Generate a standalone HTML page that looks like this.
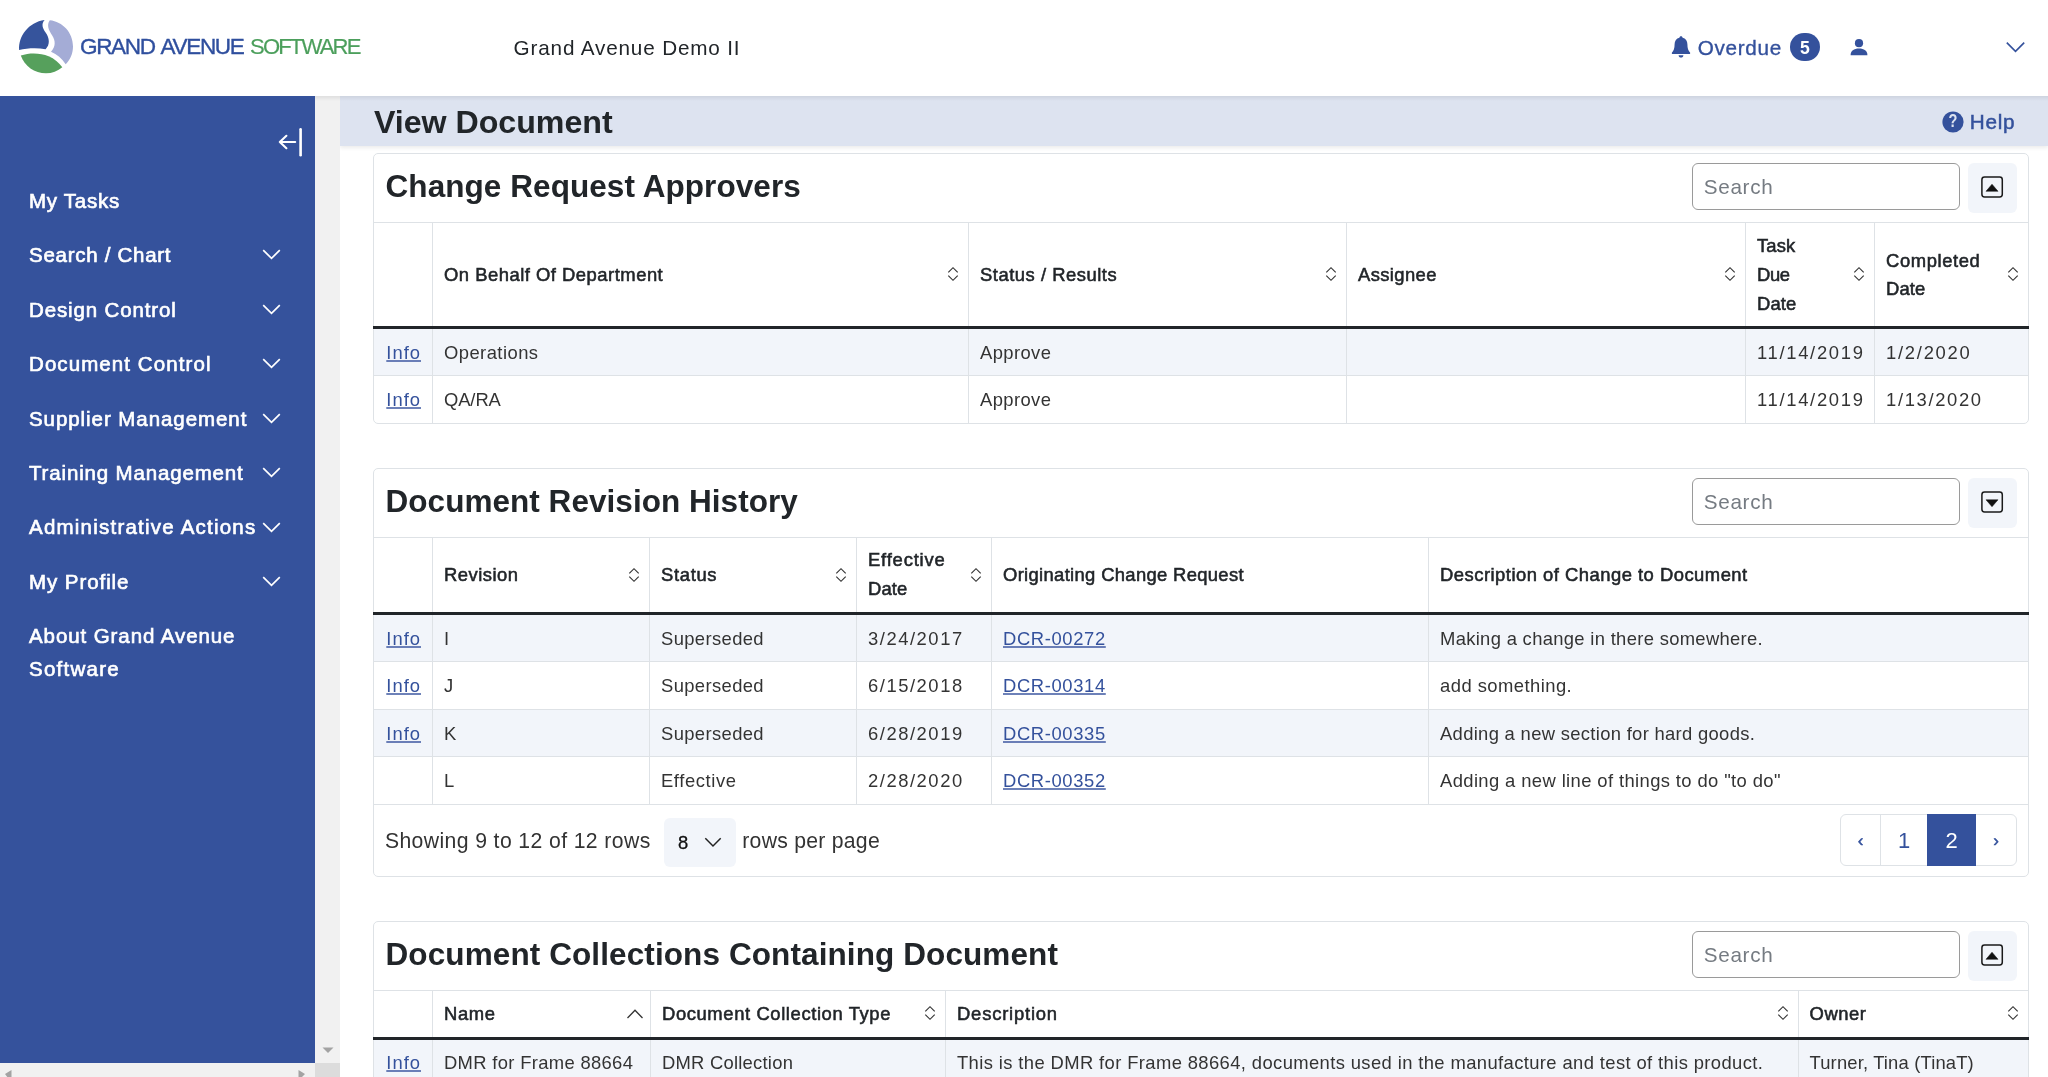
<!DOCTYPE html>
<html lang="en">
<head>
<meta charset="utf-8">
<title>View Document</title>
<style>
*{box-sizing:border-box;margin:0;padding:0}
html,body{width:2048px;height:1077px;overflow:hidden;background:#fff}
body{font-family:"Liberation Sans",Arial,sans-serif;font-size:18.4px;color:#333;position:relative}
.abs{position:absolute}
.t{position:absolute;white-space:nowrap;line-height:1}
a{color:#34519c;text-decoration:underline;text-underline-offset:1.4px;text-decoration-thickness:2px;text-decoration-color:rgba(52,81,156,.72)}
/* header */
#hdr{position:absolute;left:0;top:0;width:2048px;height:96px;background:#fff}
#hshadow{position:absolute;left:315px;top:96px;width:1733px;height:5px;background:linear-gradient(rgba(0,0,0,.07),rgba(0,0,0,0));z-index:5;pointer-events:none}
/* sidebar */
#side{position:absolute;left:0;top:96px;width:315px;height:967px;background:#35529c;color:#fff}
#side .it{position:absolute;left:29px;font-weight:400;-webkit-text-stroke:.65px #fff;font-size:20.5px;line-height:24px;white-space:nowrap}
#side svg.ch{position:absolute;left:262px;width:19px;height:11px}
#vs{position:absolute;left:315px;top:96px;width:25px;height:967px;background:#f1f1f1}
#hs{position:absolute;left:0;top:1063px;width:315px;height:14px;background:#f1f1f1}
#cs{position:absolute;left:315px;top:1063px;width:25px;height:14px;background:#dcdcdc}
/* main */
#tb{position:absolute;left:340px;top:96px;width:1708px;height:50px;background:#dde3f0;box-shadow:0 2px 4px rgba(0,0,0,.08);clip-path:inset(0 0 -10px 0)}
.card{position:absolute;left:373px;width:1656px;border:1px solid #dee2e6;border-radius:5px;background:#fff}
.h3{position:absolute;left:11.5px;font-weight:700;font-size:31.5px;line-height:36px;color:#212529;white-space:nowrap}
.srch{position:absolute;left:1317.5px;width:268px;height:47px;border:1.3px solid #9a9a9a;border-radius:6px;background:#fff}
.srch span{position:absolute;left:11.2px;top:11px;font-size:20.7px;line-height:24px;color:#757b82;letter-spacing:.7px}
.tog{position:absolute;left:1593.5px;width:49.5px;height:49.5px;border-radius:6px;background:#f2f5fa}
.tog svg{position:absolute;left:12px;top:11.9px;width:24px;height:24px}
.row{position:absolute;left:0;width:1654px;border-top:1px solid #dee2e6}
.row.s{background:#f2f5fa}
.c{position:absolute;top:0;height:100%;border-left:1px solid #dee2e6;padding-left:11px;white-space:nowrap;display:flex;align-items:center}
.c.f{border-left:0;padding-left:12.3px}
.b{padding-top:1.2px}
.hd{font-weight:400;color:#212529;font-size:18.4px;line-height:28.7px;-webkit-text-stroke:.55px #212529}
.hd i{font-style:normal}
.hd .c{white-space:normal;padding-top:1.6px}
.thick{position:absolute;left:-1px;width:1656px;height:2.6px;background:#212529}
svg.so{position:absolute;width:12px;height:16px}
</style>
</head>
<body>
<div id="wrap" style="position:absolute;left:0;top:0;width:2048px;height:1077px;will-change:transform">
<div id="hdr">
<svg class="abs" style="left:0;top:0" width="100" height="96" viewBox="0 0 100 96">
<path d="M19.1 49.9 C18.2 36.5 28.5 22.2 44.6 20.1 C41 24 42.6 28.5 45.6 32.5 C49.5 38 50.3 44.5 45.6 49.2 C37 47.6 27 48.2 19.1 49.9Z" fill="#36549c"/>
<path d="M49.8 20.3 C62.5 21.5 73 32.5 73 46.5 C73 53.5 70.3 59.5 65.7 64.2 C62 58.5 57 54.3 51 51.7 C55.8 46.5 55.6 41 52.2 35.6 C48.8 30.2 46.3 25.2 49.8 20.3Z" fill="#a4acd6"/>
<path d="M20.8 55.4 C30 52.4 40.5 52.8 48.6 56.2 C54.3 58.7 59 62.5 62.3 67.2 C57.8 71 52 73.3 46 73.3 C34.5 73.3 24.5 66 20.8 55.4Z" fill="#56a05c"/>
</svg>
<span class="t" id="lg1" style="left:80.3px;top:32.9px;font-size:22.8px;line-height:26px;color:#2f4f9e;-webkit-text-stroke:.35px #2f4f9e;letter-spacing:-1.4px;word-spacing:2.4px;transform-origin:0 50%;transform:scaleX(.99)">GRAND AVENUE</span>
<span class="t" id="lg2" style="left:250.4px;top:32.9px;font-size:22.8px;line-height:26px;color:#4c9f5c;-webkit-text-stroke:.2px #4c9f5c;letter-spacing:-1.9px;transform-origin:0 50%;transform:scaleX(.968)">SOFTWARE</span>
<span class="t" id="demo" style="left:513.6px;top:35.5px;font-size:20.7px;line-height:24px;color:#212529;letter-spacing:.84px">Grand Avenue Demo II</span>
<svg class="abs" style="left:1671px;top:35px" width="20" height="24" viewBox="0 0 20 24"><path d="M10 1.2 C10.9 1.2 11.6 1.9 11.6 2.8 C14.6 3.5 16.4 6.1 16.4 9.3 C16.4 13.6 17.3 15.6 19 17.4 C19.5 18 19.1 19 18.3 19 L1.7 19 C.9 19 .5 18 1 17.4 C2.7 15.6 3.6 13.6 3.6 9.3 C3.6 6.1 5.4 3.5 8.4 2.8 C8.4 1.9 9.1 1.2 10 1.2Z M7.6 20.2 L12.4 20.2 C12.4 21.6 11.3 22.6 10 22.6 C8.7 22.6 7.6 21.6 7.6 20.2Z" fill="#34519c"/></svg>
<span class="t" id="ovd" style="left:1697.7px;top:35.8px;font-size:20.7px;line-height:24px;color:#34519c;letter-spacing:.7px;-webkit-text-stroke:.35px #34519c">Overdue</span>
<div class="abs" style="left:1790px;top:32.5px;width:30px;height:28.6px;border-radius:15px;background:#34519c"></div>
<span class="t" style="left:1790px;width:30px;text-align:center;top:36.6px;font-size:17.6px;line-height:22px;color:#fff;font-weight:700">5</span>
<svg class="abs" style="left:1849px;top:38px" width="20" height="18" viewBox="0 0 20 18"><circle cx="10" cy="5.2" r="4.1" fill="#34519c"/><path d="M1.6 17.2 C1.6 12.8 5 10.6 10 10.6 C15 10.6 18.4 12.8 18.4 17.2Z" fill="#34519c"/></svg>
<svg class="abs" style="left:2005px;top:41px" width="21" height="13" viewBox="0 0 21 13"><path d="M1.8 1.6 L10.5 10.3 L19.2 1.6" fill="none" stroke="#34519c" stroke-width="1.6"/></svg>
</div>
<div id="hshadow"></div>
<div id="side">
<svg class="abs" style="left:274px;top:28px" width="34" height="36" viewBox="0 0 34 36"><path d="M26.6 5.2 V31.2" stroke="#fff" stroke-width="2.6" stroke-linecap="round" fill="none"/><path d="M21.2 18 H5.8 M12.4 11.8 L5.8 18 L12.4 24.2" stroke="#fff" stroke-width="2.1" stroke-linecap="round" stroke-linejoin="round" fill="none"/></svg>
<div class="it" style="top:92.8px;letter-spacing:0.733px">My Tasks</div>
<div class="it" style="top:147.1px;letter-spacing:0.723px">Search / Chart</div>
<svg class="ch" style="top:153.4px" viewBox="0 0 19 11"><path d="M1.2 1.2 L9.5 9.3 L17.8 1.2" fill="none" stroke="#fff" stroke-width="1.7"/></svg>
<div class="it" style="top:201.9px;letter-spacing:0.86px">Design Control</div>
<svg class="ch" style="top:208.2px" viewBox="0 0 19 11"><path d="M1.2 1.2 L9.5 9.3 L17.8 1.2" fill="none" stroke="#fff" stroke-width="1.7"/></svg>
<div class="it" style="top:255.9px;letter-spacing:1.083px">Document Control</div>
<svg class="ch" style="top:262.2px" viewBox="0 0 19 11"><path d="M1.2 1.2 L9.5 9.3 L17.8 1.2" fill="none" stroke="#fff" stroke-width="1.7"/></svg>
<div class="it" style="top:310.5px;letter-spacing:0.934px">Supplier Management</div>
<svg class="ch" style="top:316.8px" viewBox="0 0 19 11"><path d="M1.2 1.2 L9.5 9.3 L17.8 1.2" fill="none" stroke="#fff" stroke-width="1.7"/></svg>
<div class="it" style="top:364.9px;letter-spacing:0.837px">Training Management</div>
<svg class="ch" style="top:371.2px" viewBox="0 0 19 11"><path d="M1.2 1.2 L9.5 9.3 L17.8 1.2" fill="none" stroke="#fff" stroke-width="1.7"/></svg>
<div class="it" style="top:419.4px;letter-spacing:1.224px">Administrative Actions</div>
<svg class="ch" style="top:425.7px" viewBox="0 0 19 11"><path d="M1.2 1.2 L9.5 9.3 L17.8 1.2" fill="none" stroke="#fff" stroke-width="1.7"/></svg>
<div class="it" style="top:473.8px;letter-spacing:0.93px">My Profile</div>
<svg class="ch" style="top:480.1px" viewBox="0 0 19 11"><path d="M1.2 1.2 L9.5 9.3 L17.8 1.2" fill="none" stroke="#fff" stroke-width="1.7"/></svg>
<div class="it" style="top:528.0px;letter-spacing:0.912px">About Grand Avenue</div>
<div class="it" style="top:560.5px;letter-spacing:1.246px">Software</div>
</div>
<div id="vs"><svg class="abs" style="left:7px;top:951px" width="12" height="7" viewBox="0 0 12 7"><path d="M0.5 0.5 H11.5 L6 6Z" fill="#a3a3a3"/></svg></div><div id="hs"><svg class="abs" style="left:4px;top:7px" width="8" height="8" viewBox="0 0 8 8"><path d="M7.5 0 V8 H4 L1 4Z" fill="#a3a3a3"/></svg><svg class="abs" style="left:298px;top:7px" width="8" height="8" viewBox="0 0 8 8"><path d="M.5 0 V8 H3 L7 4Z" fill="#a3a3a3"/></svg></div><div id="cs"></div>
<!--MAIN-->
<div id="tb"><div class="t" style="left:34px;top:8px;font-weight:700;font-size:32.2px;line-height:36px;color:#212529;letter-spacing:-.04px">View Document</div>
<svg class="abs" style="left:1600.9px;top:13.5px" width="24" height="24" viewBox="0 0 24 24"><circle cx="12" cy="12" r="10.6" fill="#34519c"/></svg>
<div class="t" style="left:1600.9px;width:24px;text-align:center;top:16.3px;font-size:18.2px;line-height:18px;font-weight:700;transform:scaleX(.8);color:#dde3f0">?</div>
<div class="t" style="left:1629.8px;top:13.5px;font-size:20.7px;line-height:24px;color:#34519c;letter-spacing:.72px;-webkit-text-stroke:.5px #34519c">Help</div>
</div>
<div class="card" style="top:153px;height:270.5px">
<div class="h3" style="top:14.40px;letter-spacing:0.07px">Change Request Approvers</div>
<div class="srch" style="top:9.2px"><span>Search</span></div>
<div class="tog" style="top:9.2px"><svg viewBox="0 0 24 24"><rect x="1.9" y="2.1" width="20.4" height="19.8" rx="2.6" fill="none" stroke="#1a1a1a" stroke-width="1.5"/><path d="M6 16.3 L12 9.2 L18 16.3Z" fill="#111" stroke="#111" stroke-width=".5" stroke-linejoin="round"/></svg></div>
<div class="row hd" style="top:68px;height:104px">
<div class="c f" style="left:0px;width:58px;letter-spacing:0px"><span></span></div>
<div class="c" style="left:58px;width:536px;letter-spacing:0.51px"><span>On Behalf Of Department</span><svg class="so" style="left:514.2px;top:43.0px" viewBox="0 0 12 16"><path d="M1.3 6.4 L6 1.7 L10.7 6.4 M1.3 9.6 L6 14.3 L10.7 9.6" fill="none" stroke="#333" stroke-width="1.15"/></svg></div>
<div class="c" style="left:594px;width:378px;letter-spacing:0.52px"><span>Status / Results</span><svg class="so" style="left:356.2px;top:43.0px" viewBox="0 0 12 16"><path d="M1.3 6.4 L6 1.7 L10.7 6.4 M1.3 9.6 L6 14.3 L10.7 9.6" fill="none" stroke="#333" stroke-width="1.15"/></svg></div>
<div class="c" style="left:972px;width:399px;letter-spacing:0.39px"><span>Assignee</span><svg class="so" style="left:377.2px;top:43.0px" viewBox="0 0 12 16"><path d="M1.3 6.4 L6 1.7 L10.7 6.4 M1.3 9.6 L6 14.3 L10.7 9.6" fill="none" stroke="#333" stroke-width="1.15"/></svg></div>
<div class="c" style="left:1371px;width:129px;letter-spacing:0.13px"><span style="display:block;width:48px">Task <i style="letter-spacing:-.4px">Due</i> Date</span><svg class="so" style="left:107.2px;top:43.0px" viewBox="0 0 12 16"><path d="M1.3 6.4 L6 1.7 L10.7 6.4 M1.3 9.6 L6 14.3 L10.7 9.6" fill="none" stroke="#333" stroke-width="1.15"/></svg></div>
<div class="c" style="left:1500px;width:154px;letter-spacing:0.6px"><span style="display:block;width:104px">Completed <i style="letter-spacing:.13px">Date</i></span><svg class="so" style="left:132.2px;top:43.0px" viewBox="0 0 12 16"><path d="M1.3 6.4 L6 1.7 L10.7 6.4 M1.3 9.6 L6 14.3 L10.7 9.6" fill="none" stroke="#333" stroke-width="1.15"/></svg></div>
</div>
<div class="thick" style="top:172.2px"></div>
<div class="row s" style="border-top:0;top:174.6px;height:46.8px">
<div class="c f b" style="left:0px;width:58px;letter-spacing:1.0px"><a>Info</a></div><div class="c b" style="left:58px;width:536px;letter-spacing:0.45px">Operations</div><div class="c b" style="left:594px;width:378px;letter-spacing:0.4px">Approve</div><div class="c b" style="left:972px;width:399px;letter-spacing:0.28px"></div><div class="c b" style="left:1371px;width:129px;letter-spacing:1.69px">11/14/2019</div><div class="c b" style="left:1500px;width:154px;letter-spacing:1.74px">1/2/2020</div>
</div>
<div class="row" style="top:221.4px;height:47.4px">
<div class="c f b" style="left:0px;width:58px;letter-spacing:1.0px"><a>Info</a></div><div class="c b" style="left:58px;width:536px;letter-spacing:-0.1px">QA/RA</div><div class="c b" style="left:594px;width:378px;letter-spacing:0.4px">Approve</div><div class="c b" style="left:972px;width:399px;letter-spacing:0.28px"></div><div class="c b" style="left:1371px;width:129px;letter-spacing:1.69px">11/14/2019</div><div class="c b" style="left:1500px;width:154px;letter-spacing:1.66px">1/13/2020</div>
</div>
</div>
<div class="card" style="top:467.5px;height:409.5px">
<div class="h3" style="top:14.50px;letter-spacing:0.04px">Document Revision History</div>
<div class="srch" style="top:9.7px"><span>Search</span></div>
<div class="tog" style="top:9.7px"><svg viewBox="0 0 24 24"><rect x="1.9" y="2.1" width="20.4" height="19.8" rx="2.6" fill="none" stroke="#1a1a1a" stroke-width="1.5"/><path d="M6 9.8 L18 9.8 L12 16.7Z" fill="#111" stroke="#111" stroke-width=".5" stroke-linejoin="round"/></svg></div>
<div class="row hd" style="top:68.5px;height:75.2px">
<div class="c f" style="padding-top:0px;left:0px;width:58px;letter-spacing:0px"><span></span></div>
<div class="c" style="padding-top:0px;left:58px;width:217px;letter-spacing:0.48px"><span>Revision</span><svg class="so" style="left:195.2px;top:28.6px" viewBox="0 0 12 16"><path d="M1.3 6.4 L6 1.7 L10.7 6.4 M1.3 9.6 L6 14.3 L10.7 9.6" fill="none" stroke="#333" stroke-width="1.15"/></svg></div>
<div class="c" style="padding-top:0px;left:275px;width:207px;letter-spacing:0.68px"><span>Status</span><svg class="so" style="left:185.2px;top:28.6px" viewBox="0 0 12 16"><path d="M1.3 6.4 L6 1.7 L10.7 6.4 M1.3 9.6 L6 14.3 L10.7 9.6" fill="none" stroke="#333" stroke-width="1.15"/></svg></div>
<div class="c" style="padding-top:0px;left:482px;width:135px;letter-spacing:0.82px"><span style="display:block;width:86px">Effective <i style="letter-spacing:.13px">Date</i></span><svg class="so" style="left:113.2px;top:28.6px" viewBox="0 0 12 16"><path d="M1.3 6.4 L6 1.7 L10.7 6.4 M1.3 9.6 L6 14.3 L10.7 9.6" fill="none" stroke="#333" stroke-width="1.15"/></svg></div>
<div class="c" style="padding-top:0px;left:617px;width:437px;letter-spacing:0.34px"><span>Originating Change Request</span></div>
<div class="c" style="padding-top:0px;left:1054px;width:600px;letter-spacing:0.495px"><span>Description of Change to Document</span></div>
</div>
<div class="thick" style="top:143.89999999999998px"></div>
<div class="row s" style="border-top:0;top:146.3px;height:46.4px">
<div class="c f b" style="left:0px;width:58px;letter-spacing:1.0px"><a>Info</a></div><div class="c b" style="left:58px;width:217px;letter-spacing:0.28px">I</div><div class="c b" style="left:275px;width:207px;letter-spacing:0.38px">Superseded</div><div class="c b" style="left:482px;width:135px;letter-spacing:1.54px">3/24/2017</div><div class="c b" style="left:617px;width:437px;letter-spacing:0.63px"><a>DCR-00272</a></div><div class="c b" style="left:1054px;width:600px;letter-spacing:0.32px">Making a change in there somewhere.</div>
</div>
<div class="row" style="top:192.7px;height:47.5px">
<div class="c f b" style="left:0px;width:58px;letter-spacing:1.0px"><a>Info</a></div><div class="c b" style="left:58px;width:217px;letter-spacing:0.28px">J</div><div class="c b" style="left:275px;width:207px;letter-spacing:0.38px">Superseded</div><div class="c b" style="left:482px;width:135px;letter-spacing:1.54px">6/15/2018</div><div class="c b" style="left:617px;width:437px;letter-spacing:0.63px"><a>DCR-00314</a></div><div class="c b" style="left:1054px;width:600px;letter-spacing:0.46px">add something.</div>
</div>
<div class="row s" style="top:240.2px;height:47.5px">
<div class="c f b" style="left:0px;width:58px;letter-spacing:1.0px"><a>Info</a></div><div class="c b" style="left:58px;width:217px;letter-spacing:0.28px">K</div><div class="c b" style="left:275px;width:207px;letter-spacing:0.38px">Superseded</div><div class="c b" style="left:482px;width:135px;letter-spacing:1.54px">6/28/2019</div><div class="c b" style="left:617px;width:437px;letter-spacing:0.63px"><a>DCR-00335</a></div><div class="c b" style="left:1054px;width:600px;letter-spacing:0.32px">Adding a new section for hard goods.</div>
</div>
<div class="row" style="top:287.7px;height:47.5px">
<div class="c f b" style="left:0px;width:58px;letter-spacing:0.28px"></div><div class="c b" style="left:58px;width:217px;letter-spacing:0.28px">L</div><div class="c b" style="left:275px;width:207px;letter-spacing:0.6px">Effective</div><div class="c b" style="left:482px;width:135px;letter-spacing:1.54px">2/28/2020</div><div class="c b" style="left:617px;width:437px;letter-spacing:0.63px"><a>DCR-00352</a></div><div class="c b" style="left:1054px;width:600px;letter-spacing:0.39px">Adding a new line of things to do "to do"</div>
</div>
<div class="row" style="top:335.7px;height:1px"></div>
<div class="t" style="left:10.9px;top:360.3px;font-size:21.2px;line-height:24px;color:#333;letter-spacing:.39px">Showing 9 to 12 of 12 rows</div>
<div class="abs" style="left:290.1px;top:349.3px;width:72.4px;height:48.8px;border-radius:6px;background:#f2f5fa"></div>
<div class="t" style="left:303.9px;top:362px;font-size:18.4px;line-height:24px;color:#111;-webkit-text-stroke:.3px #111">8</div>
<svg class="abs" style="left:329.8px;top:368.5px" width="18" height="11" viewBox="0 0 18 11"><path d="M1.3 1.3 L9 9 L16.7 1.3" fill="none" stroke="#222" stroke-width="1.5"/></svg>
<div class="t" style="left:368.3px;top:360.3px;font-size:21.2px;line-height:24px;color:#333;letter-spacing:.26px">rows per page</div>
<div class="abs" style="left:1466px;top:345.5px;width:177px;height:51.5px;border:1px solid #dee2e6;border-radius:6px">
<div class="abs" style="left:39.3px;top:0;width:1px;height:50px;background:#dee2e6"></div>
<div class="abs" style="left:86.1px;top:-1px;width:49px;height:52px;background:#34519c"></div>
<div class="t" style="left:0;width:39px;text-align:center;top:13.6px;font-size:17px;line-height:24px;color:#34519c;-webkit-text-stroke:.5px #34519c">&lsaquo;</div>
<div class="t" style="left:40px;width:46px;text-align:center;top:13.5px;font-size:22px;line-height:24px;color:#34519c">1</div>
<div class="t" style="left:86px;width:49px;text-align:center;top:13.5px;font-size:22px;line-height:24px;color:#fff">2</div>
<div class="t" style="left:135px;width:40px;text-align:center;top:13.6px;font-size:17px;line-height:24px;color:#34519c;-webkit-text-stroke:.5px #34519c">&rsaquo;</div>
</div>
</div>
<div class="card" style="top:921px;height:200px">
<div class="h3" style="top:13.90px;letter-spacing:0.1px">Document Collections Containing Document</div>
<div class="srch" style="top:9.2px"><span>Search</span></div>
<div class="tog" style="top:9.2px"><svg viewBox="0 0 24 24"><rect x="1.9" y="2.1" width="20.4" height="19.8" rx="2.6" fill="none" stroke="#1a1a1a" stroke-width="1.5"/><path d="M6 16.3 L12 9.2 L18 16.3Z" fill="#111" stroke="#111" stroke-width=".5" stroke-linejoin="round"/></svg></div>
<div class="row hd" style="top:68px;height:46.9px">
<div class="c f" style="left:0px;width:58px;letter-spacing:0px"><span></span></div>
<div class="c" style="left:58px;width:218px;letter-spacing:0.67px"><span>Name</span><svg class="so" style="left:193.05px;top:16.75px;width:18px;height:12px" viewBox="0 0 18 12"><path d="M1.5 10 L9 2.2 L16.5 10" fill="none" stroke="#333" stroke-width="1.3"/></svg></div>
<div class="c" style="left:276px;width:295px;letter-spacing:0.61px"><span>Document Collection Type</span><svg class="so" style="left:273.2px;top:14.45px" viewBox="0 0 12 16"><path d="M1.3 6.4 L6 1.7 L10.7 6.4 M1.3 9.6 L6 14.3 L10.7 9.6" fill="none" stroke="#333" stroke-width="1.15"/></svg></div>
<div class="c" style="left:571px;width:852.5px;letter-spacing:0.81px"><span>Description</span><svg class="so" style="left:830.7px;top:14.45px" viewBox="0 0 12 16"><path d="M1.3 6.4 L6 1.7 L10.7 6.4 M1.3 9.6 L6 14.3 L10.7 9.6" fill="none" stroke="#333" stroke-width="1.15"/></svg></div>
<div class="c" style="left:1423.5px;width:230.5px;letter-spacing:0.58px"><span>Owner</span><svg class="so" style="left:208.7px;top:14.45px" viewBox="0 0 12 16"><path d="M1.3 6.4 L6 1.7 L10.7 6.4 M1.3 9.6 L6 14.3 L10.7 9.6" fill="none" stroke="#333" stroke-width="1.15"/></svg></div>
</div>
<div class="thick" style="top:115.10000000000001px"></div>
<div class="row s" style="border-top:0;top:117.5px;height:46.8px">
<div class="c f b" style="left:0px;width:58px;letter-spacing:1.0px"><a>Info</a></div><div class="c b" style="left:58px;width:218px;letter-spacing:0.33px">DMR for Frame 88664</div><div class="c b" style="left:276px;width:295px;letter-spacing:0.24px">DMR Collection</div><div class="c b" style="left:571px;width:852.5px;letter-spacing:0.386px">This is the DMR for Frame 88664, documents used in the manufacture and test of this product.</div><div class="c b" style="left:1423.5px;width:230.5px;letter-spacing:0.16px">Turner, Tina (TinaT)</div>
</div>
</div>
<!--/MAIN-->
</div>
</body>
</html>
